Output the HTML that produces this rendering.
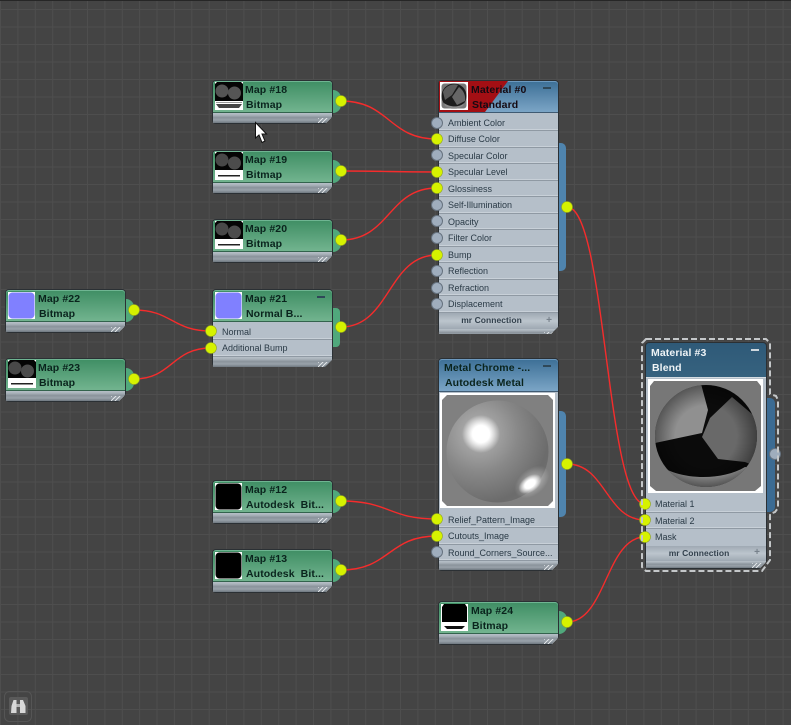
<!DOCTYPE html>
<html><head><meta charset="utf-8"><style>
html,body{margin:0;padding:0;width:791px;height:725px;overflow:hidden;background:#444}
body{filter:blur(.3px)}
#bg{position:absolute;left:0;top:0;width:791px;height:725px;background-color:#444;
background-image:linear-gradient(to right,#4e4e4e 0,#4e4e4e 1px,transparent 1px),linear-gradient(to bottom,#4e4e4e 0,#4e4e4e 1px,transparent 1px);
background-size:17.4px 17.5px;background-position:0 8px;border-top:1px solid #262626;box-sizing:border-box}
.t{position:absolute;background:#50a87c;border-radius:0 8px 8px 0;box-sizing:border-box}
.tb{background:#4f84ae;border-radius:0 5px 5px 0}
.n{position:absolute;width:121px;background:#2b3034;border-radius:4px;box-sizing:border-box;padding:1px;font-family:"Liberation Sans",sans-serif;
clip-path:polygon(0 0,100% 0,100% calc(100% - 8px),calc(100% - 8px) 100%,0 100%)}
.h{position:relative;border-radius:3px 3px 0 0;background:linear-gradient(#3f8e64,#72b48f);border-bottom:1px solid #33634d;box-sizing:border-box;height:32px;box-shadow:inset 0 1px 0 #6fb592}
.hb{background:linear-gradient(#3c6f96,#7ba5c6);box-shadow:inset 0 1px 0 #6d9ac0;border-bottom:1px solid #3f5a72}
.a,.b{position:absolute;font-weight:bold;font-size:10.5px;line-height:12px;color:#0a241d;white-space:nowrap;letter-spacing:.1px}
.a{left:32px;top:3px}.b{left:33px;top:18px}
.f{position:relative;height:10px;background:linear-gradient(#b6bfc7 0,#aab3bb 20%,#8a939b 45%,#99a2aa 70%,#6f7880 100%)}
.f::after{content:"";position:absolute;right:0;bottom:0;width:14px;height:5px;background:repeating-linear-gradient(135deg,#dfe3e6 0,#dfe3e6 1px,transparent 1px,transparent 3px)}
.body{background:#b5bfc9}
.rows{padding-top:1.5px}
.r{height:16.5px;box-sizing:border-box;border-bottom:1px solid #8f99a3;box-shadow:inset 0 -1px 0 #c8d0d8;font-size:9px;line-height:17px;padding-left:9px;color:#2a3a46;white-space:nowrap;overflow:hidden}
.mr{height:16px;text-align:center;font-size:8.5px;font-weight:bold;line-height:15px;color:#33414d;letter-spacing:.05px;background:linear-gradient(#9fa9b3,#bcc5cd 50%,#9ea8b2);position:relative;padding-right:14px;box-sizing:border-box}
.mr i{position:absolute;right:6px;top:0;font-style:normal;color:#77818b;font-size:10px}
.mn{position:absolute;right:7px;top:6px;width:8px;height:2px;background:#2f4858}
#o{position:absolute;left:0;top:0}
.w{fill:none;stroke:#f52c2c;stroke-width:1.4}
.y{fill:#d6f200;stroke:#94a820;stroke-width:.6}
.g{fill:#9fadbd;stroke:#66727f;stroke-width:1}
</style></head><body>
<div id="bg"></div>

<div class="t" style="left:331px;top:90px;width:10px;height:23px"></div>
<div class="t" style="left:331px;top:160px;width:10px;height:23px"></div>
<div class="t" style="left:331px;top:229px;width:10px;height:23px"></div>
<div class="t" style="left:331px;top:308px;width:9px;height:39px;border-radius:0 4px 4px 0"></div>
<div class="t" style="left:124px;top:299px;width:10px;height:23px"></div>
<div class="t" style="left:124px;top:368px;width:10px;height:23px"></div>
<div class="t" style="left:331px;top:490px;width:10px;height:23px"></div>
<div class="t" style="left:331px;top:559px;width:10px;height:23px"></div>
<div class="t" style="left:557px;top:611px;width:10px;height:23px"></div>
<div class="t tb" style="left:558px;top:143px;width:8px;height:128px"></div>
<div class="t tb" style="left:558px;top:411px;width:8px;height:106px"></div>
<div class="t tb" style="left:767px;top:398px;width:8px;height:114px;background:#3b6b93"></div>

<div class="n" style="left:212px;top:80px;height:44px"><div class="h"><div class="a">Map #18</div><div class="b">Bitmap</div></div><div class="f"></div></div>
<div class="n" style="left:212px;top:150px;height:44px"><div class="h"><div class="a">Map #19</div><div class="b">Bitmap</div></div><div class="f"></div></div>
<div class="n" style="left:212px;top:219px;height:44px"><div class="h"><div class="a">Map #20</div><div class="b">Bitmap</div></div><div class="f"></div></div>
<div class="n" style="left:5px;top:289px;height:44px"><div class="h"><div class="a">Map #22</div><div class="b">Bitmap</div></div><div class="f"></div></div>
<div class="n" style="left:5px;top:358px;height:44px"><div class="h"><div class="a">Map #23</div><div class="b">Bitmap</div></div><div class="f"></div></div>
<div class="n" style="left:212px;top:480px;height:44px"><div class="h"><div class="a">Map #12</div><div class="b">Autodesk&nbsp; Bit...</div></div><div class="f"></div></div>
<div class="n" style="left:212px;top:549px;height:44px"><div class="h"><div class="a">Map #13</div><div class="b">Autodesk&nbsp; Bit...</div></div><div class="f"></div></div>
<div class="n" style="left:438px;top:601px;height:44px"><div class="h"><div class="a">Map #24</div><div class="b">Bitmap</div></div><div class="f"></div></div>

<div class="n" style="left:212px;top:289px;height:78px"><div class="h"><div class="a">Map #21</div><div class="b">Normal B...</div><div class="mn"></div></div>
<div class="body rows"><div class="r">Normal</div><div class="r">Additional Bump</div></div><div class="f"></div></div>

<div class="n" style="left:438px;top:80px;height:254px"><div class="h hb"><svg width="119" height="31" style="position:absolute;left:0;top:0"><polygon points="0,0 69,0 46,31 0,31" fill="#a30f14"/></svg><div class="a" style="color:#150a12">Material #0</div><div class="b" style="color:#150a12">Standard</div><div class="mn"></div></div>
<div class="body rows">
<div class="r">Ambient Color</div><div class="r">Diffuse Color</div><div class="r">Specular Color</div><div class="r">Specular Level</div><div class="r">Glossiness</div><div class="r">Self-Illumination</div><div class="r">Opacity</div><div class="r">Filter Color</div><div class="r">Bump</div><div class="r">Reflection</div><div class="r">Refraction</div><div class="r">Displacement</div>
</div><div class="mr">mr Connection<i>+</i></div><div class="f" style="height:8px"></div></div>

<div class="n" style="left:438px;top:358px;height:213px"><div class="h hb" style="height:33px"><div class="a" style="left:5px;top:3px">Metal Chrome -...</div><div class="b" style="left:6px;top:18px">Autodesk Metal</div><div class="mn"></div></div>
<div class="body" style="height:118px"></div>
<div class="body rows"><div class="r">Relief_Pattern_Image</div><div class="r">Cutouts_Image</div><div class="r">Round_Corners_Source...</div></div><div class="f" style="height:9px"></div></div>

<div class="n" style="left:645px;top:342px;height:227px;width:122px"><div class="h" style="height:35px;background:linear-gradient(#2f5a78,#36627f);box-shadow:none;border-bottom:1px solid #d5dce2"><div class="a" style="color:#eef3f6;left:5px;top:4px">Material #3</div><div class="b" style="color:#eef3f6;left:6px;top:19px">Blend</div><div class="mn" style="background:#cfd8de"></div></div>
<div class="body" style="height:116.5px"></div>
<div class="body rows"><div class="r">Material 1</div><div class="r">Material 2</div><div class="r" style="border:0;box-shadow:none">Mask</div></div><div class="mr" style="height:15px;line-height:14px">mr Connection<i>+</i></div><div class="f" style="height:7px"></div></div>

<svg id="o" width="791" height="725" viewBox="0 0 791 725">
<defs>
<radialGradient id="sp" cx=".32" cy=".32" r=".85"><stop offset="0" stop-color="#c4c4c4"/><stop offset=".2" stop-color="#a2a2a2"/><stop offset=".45" stop-color="#888"/><stop offset=".8" stop-color="#6c6c6c"/><stop offset="1" stop-color="#707070"/></radialGradient>
<radialGradient id="hl"><stop offset="0" stop-color="#fff"/><stop offset=".45" stop-color="#fff"/><stop offset="1" stop-color="#fff" stop-opacity="0"/></radialGradient>
<radialGradient id="hl2"><stop offset="0" stop-color="#fff" stop-opacity=".55"/><stop offset="1" stop-color="#fff" stop-opacity="0"/></radialGradient>
<radialGradient id="sh"><stop offset=".6" stop-color="#000" stop-opacity="0"/><stop offset="1" stop-color="#000" stop-opacity=".4"/></radialGradient>
<linearGradient id="bt" x1="0" y1="0" x2="0" y2="1"><stop offset="0" stop-color="#e6e6e6"/><stop offset=".3" stop-color="#b0b0b0"/><stop offset="1" stop-color="#777"/></linearGradient>
<clipPath id="bc"><circle cx="706" cy="436" r="51"/></clipPath>
<symbol id="tx" viewBox="0 0 28 28"><rect width="28" height="28" fill="#fff"/><path d="M2 0H26L28 2V19H0V2Z" fill="#050505"/><circle cx="7" cy="9" r="6.500" fill="#555"/><circle cx="19.500" cy="11" r="6.500" fill="#555"/><rect x="1" y="20" width="26" height="1" fill="#999"/><path d="M1 22H27L24 26H4Z" fill="#444"/></symbol>
<symbol id="tx2" viewBox="0 0 28 28"><rect width="28" height="28" fill="#fff"/><path d="M2 0H26L28 2V18H0V2Z" fill="#050505"/><circle cx="7" cy="8" r="6.500" fill="#484848"/><circle cx="19.500" cy="11" r="6.500" fill="#4c4c4c"/><rect x="3" y="23" width="22" height="1.500" fill="#222"/></symbol>
<symbol id="tb" viewBox="0 0 27 27"><rect width="27" height="27" fill="#fff"/><rect x="0.500" y="0.500" width="26" height="26" rx="4" fill="#8080ff"/></symbol>
<symbol id="tk" viewBox="0 0 27 27"><rect width="27" height="27" fill="#fff"/><rect x="0.500" y="0.500" width="26" height="26" rx="4" fill="#000"/></symbol>
<symbol id="t24" viewBox="0 0 27 27"><rect width="27" height="27" fill="#fff"/><path d="M3 0H24L26 3V18H1V3Z" fill="#000"/><path d="M3 22H24L21 25H6Z" fill="#111"/></symbol>
</defs>

<use href="#tx" x="215" y="82" width="28" height="28"/>
<use href="#tx2" x="215" y="152" width="28" height="28"/>
<use href="#tx2" x="215" y="221" width="28" height="28"/>
<use href="#tb" x="215" y="292" width="27" height="27"/>
<use href="#tb" x="8" y="292" width="27" height="27"/>
<use href="#tx2" x="8" y="360" width="28" height="28"/>
<use href="#tk" x="215" y="483" width="27" height="27"/>
<use href="#tk" x="215" y="552" width="27" height="27"/>
<use href="#t24" x="441" y="604" width="27" height="27"/>

<!-- material 0 thumb -->
<rect x="440" y="82" width="28" height="28" fill="#fff"/>
<rect x="441.500" y="83.500" width="25" height="25" rx="3" fill="#777"/>
<circle cx="454" cy="96" r="12.500" fill="#1c1c1c"/>
<path d="M443 92C445 86 453 83 458 85L452 95L445 100Z" fill="#5c5c5c"/>
<path d="M452 97L459 87C463 90 466 95 465 101L457 105Z" fill="#666"/>
<path d="M444 103C449 107 459 108 464 103L463 106C458 109 450 109 445 106Z" fill="#8a8a8a"/>

<!-- metal preview -->
<rect x="440" y="393" width="115" height="115" fill="#fff"/>
<polygon points="447,395 548,395 553,400 553,501 548,506 447,506 442,501 442,400" fill="#808080"/>
<circle cx="497.500" cy="451.500" r="51" fill="url(#sp)"/>
<circle cx="481" cy="434" r="19" fill="url(#hl)"/>
<ellipse cx="532" cy="482" rx="20" ry="13" transform="rotate(-40 532 482)" fill="url(#hl2)"/>
<ellipse cx="530" cy="484" rx="13" ry="8" transform="rotate(-35 530 484)" fill="url(#hl)"/>

<!-- blend preview -->
<rect x="648" y="379" width="115" height="114" fill="#fff"/>
<polygon points="654,381 757,381 761,386 761,486 755,491 656,491 650,486 650,386" fill="#777"/>
<circle cx="706" cy="436" r="51" fill="#0b0b0b"/>
<g clip-path="url(#bc)">
<path d="M650 380H700L708 410L702 433L655 443L650 445Z" fill="#909090"/>
<path d="M702 437L710 418L732 397L765 425V470L745 462L718 459Z" fill="#696969"/>
<path d="M655 462C675 480 720 482 745 467L765 470V495H655Z" fill="url(#bt)"/>
</g>
<circle cx="706" cy="436" r="51" fill="url(#sh)"/>

<!-- wires -->
<path class="w" d="M341 101C390 101 388 139 437 139"/>
<path class="w" d="M341 171C390 171 388 172 437 172"/>
<path class="w" d="M341 240C390 240 388 188 437 188"/>
<path class="w" d="M341 327C390 327 388 255 437 255"/>
<path class="w" d="M134 310C172 310 172 331 211 331"/>
<path class="w" d="M134 379C172 379 172 348 211 348"/>
<path class="w" d="M341 501C390 501 388 519 437 519"/>
<path class="w" d="M341 570C390 570 388 536 437 536"/>
<path class="w" d="M567 622C606 622 606 537 645 537"/>
<path class="w" d="M567 207C606 207 606 504 645 504"/>
<path class="w" d="M567 464C606 464 606 520 645 520"/>

<!-- sockets -->
<g>
<circle class="y" cx="341" cy="101" r="5.500"/><circle class="y" cx="341" cy="171" r="5.500"/><circle class="y" cx="341" cy="240" r="5.500"/><circle class="y" cx="341" cy="327" r="5.500"/><circle class="y" cx="134" cy="310" r="5.500"/><circle class="y" cx="134" cy="379" r="5.500"/><circle class="y" cx="341" cy="501" r="5.500"/><circle class="y" cx="341" cy="570" r="5.500"/><circle class="y" cx="567" cy="622" r="5.500"/><circle class="y" cx="567" cy="207" r="5.500"/><circle class="y" cx="567" cy="464" r="5.500"/>
<circle class="y" cx="211" cy="331" r="5.500"/><circle class="y" cx="211" cy="348" r="5.500"/>
<circle class="y" cx="437" cy="139" r="5.500"/><circle class="y" cx="437" cy="172" r="5.500"/><circle class="y" cx="437" cy="188" r="5.500"/><circle class="y" cx="437" cy="255" r="5.500"/><circle class="y" cx="437" cy="519" r="5.500"/><circle class="y" cx="437" cy="536" r="5.500"/>
<circle class="y" cx="645" cy="504" r="5.500"/><circle class="y" cx="645" cy="520" r="5.500"/><circle class="y" cx="645" cy="537" r="5.500"/>
</g>
<circle class="g" cx="437" cy="123" r="5.500"/><circle class="g" cx="437" cy="155" r="5.500"/><circle class="g" cx="437" cy="205" r="5.500"/><circle class="g" cx="437" cy="221" r="5.500"/><circle class="g" cx="437" cy="238" r="5.500"/><circle class="g" cx="437" cy="271" r="5.500"/><circle class="g" cx="437" cy="288" r="5.500"/><circle class="g" cx="437" cy="304" r="5.500"/><circle class="g" cx="437" cy="552" r="5.500"/>
<circle class="g" cx="775" cy="454" r="5.500"/>

<!-- selection -->
<path d="M646 339H766L770 343V394L776 396L778 400V508L775 512L770 514V560L762 571H646L642 567V343Z" fill="none" stroke="#c4c7c9" stroke-width="2" stroke-dasharray="6 3"/>

<!-- cursor -->
<path d="M255.500 122.500V138L259 135L262 142.500L265 141L262 134H266.500Z" fill="#fff" stroke="#111" stroke-width="1"/>

<!-- binoculars -->
<rect x="4.500" y="691.500" width="27" height="30" rx="5" fill="none" stroke="#555"/>
<rect x="9" y="697" width="19" height="18" rx="2" fill="#5a5a5a"/>
<path d="M13.500 700H16.500V713H11L11.500 706Z" fill="#d8d8d8"/>
<path d="M20 700H23L25.500 706V713H20Z" fill="#d8d8d8"/>
<rect x="16.500" y="704" width="3.500" height="3" fill="#b5b5b5"/>
</svg>
</body></html>
